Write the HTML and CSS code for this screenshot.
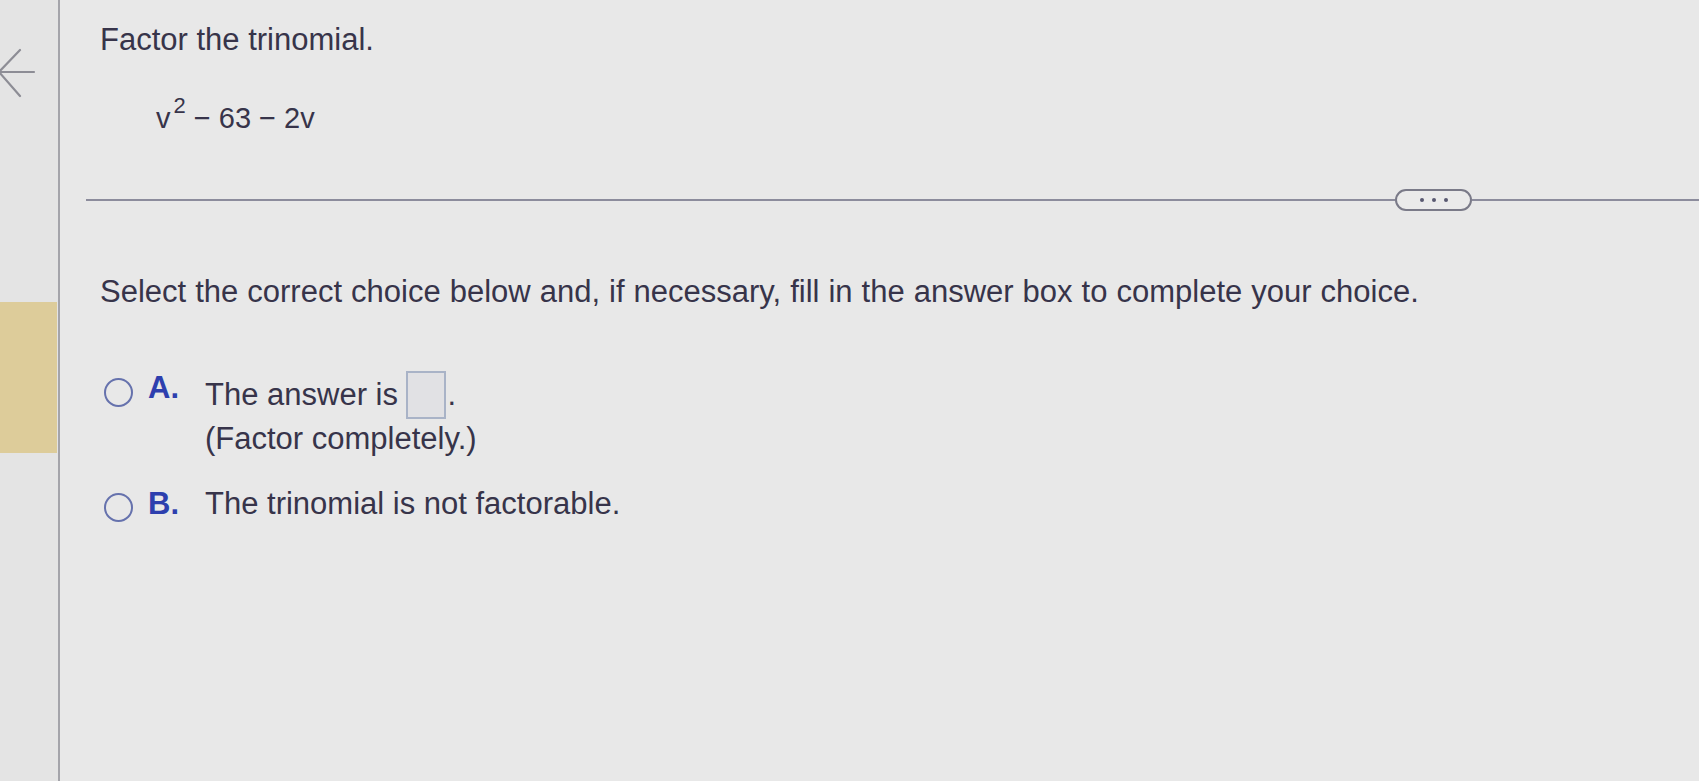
FILE: index.html
```html
<!DOCTYPE html>
<html lang="en">
<head>
<meta charset="utf-8">
<title>Factor the trinomial</title>
<link rel="stylesheet" href="styles.css">
</head>
<body>
<div class="page">
  <aside class="sidebar">
    <svg class="back" width="40" height="54" viewBox="0 0 40 54" aria-hidden="true">
      <path d="M34 24 H0 M20 2 L-1 24 L20 48" fill="none" stroke="#8d8d95" stroke-width="2.2" stroke-linecap="round" stroke-linejoin="round"/>
    </svg>
    <div class="highlight"></div>
  </aside>
  <main class="content">
    <div class="title">Factor the trinomial.</div>
    <div class="expr">v<span class="sup">2</span> − 63 − 2v</div>
    <div class="rule">
      <div class="rule-line"></div>
      <div class="pill"><span class="dot"></span><span class="dot"></span><span class="dot"></span></div>
      <div class="rule-line rule-end"></div>
    </div>
    <div class="prompt">Select the correct choice below and, if necessary, fill in the answer box to complete your choice.</div>
    <div class="option option-a">
      <span class="radio"></span>
      <span class="label">A.</span>
      <div class="option-body">
        <div class="line-box">The answer is <span class="answer-box"></span>.</div>
        <div class="line-note">(Factor completely.)</div>
      </div>
    </div>
    <div class="option option-b">
      <span class="radio"></span>
      <span class="label">B.</span>
      <div class="option-body">
        <div class="line-plain">The trinomial is not factorable.</div>
      </div>
    </div>
  </main>
</div>
</body>
</html>
```

FILE: styles.css
```css
html, body {
  margin: 0;
  padding: 0;
}
body {
  background: #e8e8e8;
  font-family: "Liberation Sans", Arial, sans-serif;
  font-size: 31px;
  color: #37344a;
  overflow: hidden;
}
.page {
  display: flex;
  min-height: 781px;
}
.sidebar {
  width: 58px;
  flex: 0 0 58px;
  background: #e4e4e4;
  border-right: 2px solid #a4a4aa;
  display: flex;
  flex-direction: column;
}
.back {
  display: block;
  margin-top: 48px;
}
.highlight {
  margin-top: 200px;
  height: 151px;
  width: 57px;
  background: #ddcc9a;
}
.content {
  flex: 1;
  padding-left: 40px;
  padding-top: 21.7px;
}
.title {
  line-height: 36px;
}
.expr {
  font-size: 29px;
  line-height: 36px;
  margin-top: 42.6px;
  margin-left: 56px;
}
.sup {
  font-size: 22px;
  position: relative;
  top: -15px;
  margin-left: 3px;
}
.rule {
  display: flex;
  align-items: center;
  height: 22px;
  margin-top: 49.7px;
  margin-left: -14px;
}
.rule-line {
  flex: 1;
  height: 2px;
  background: #8c8c9c;
}
.rule-end {
  flex: 0 0 227px;
}
.pill {
  width: 73px;
  height: 18px;
  border: 2px solid #7a7a88;
  border-radius: 12px;
  display: flex;
  align-items: center;
  justify-content: center;
  gap: 8px;
  background: #eaeaea;
}
.dot {
  width: 4px;
  height: 4px;
  border-radius: 50%;
  background: #585870;
}
.prompt {
  line-height: 36px;
  margin-top: 63.2px;
  word-spacing: 0.4px;
}
.option {
  display: flex;
  align-items: flex-start;
}
.radio {
  flex: 0 0 auto;
  width: 25px;
  height: 25px;
  border: 2px solid #6672ad;
  border-radius: 50%;
  margin-left: 4px;
  margin-top: 6.8px;
}
.label {
  flex: 0 0 auto;
  width: 57px;
  margin-left: 15px;
  font-weight: bold;
  color: #2d3fae;
}
.option-a {
  margin-top: 61px;
}
.option-a .label {
  line-height: 34px;
}
.line-box {
  line-height: 48px;
}
.answer-box {
  display: inline-block;
  width: 36px;
  height: 44px;
  border: 2px solid #a9b3c7;
  background: #e1e1e4;
  vertical-align: -14px;
  margin-left: -1px;
  margin-right: 2px;
}
.line-note {
  line-height: 40px;
}
.option-b {
  margin-top: 27px;
}
.option-b .label {
  line-height: 36px;
}
.line-plain {
  line-height: 36px;
}
```
